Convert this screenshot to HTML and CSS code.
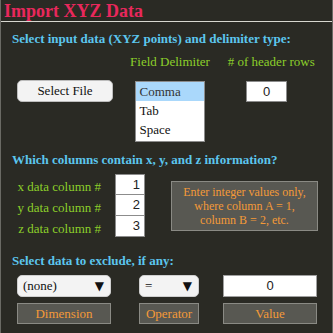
FILE: index.html
```html
<!DOCTYPE html>
<html>
<head>
<meta charset="utf-8">
<link rel="stylesheet" href="styles.css">
</head>
<body>
<div class="panel">
  <div class="header"><h1 class="title">Import XYZ Data</h1></div>

  <h2 class="heading h-first">Select input data (XYZ points) and delimiter type:</h2>
  <div class="grid3">
    <div></div>
    <div class="col-label">Field Delimiter</div>
    <div class="col-label">  # of header rows</div>
    <div class="cell-left"><div class="btn">Select File</div></div>
    <div class="cell-center">
      <div class="listbox">
        <div class="opt selected">Comma</div>
        <div class="opt">Tab</div>
        <div class="opt">Space</div>
      </div>
    </div>
    <div class="cell-center"><div class="num-box hdr">0</div></div>
  </div>

  <h2 class="heading h-second">Which columns contain x, y, and z information?</h2>
  <div class="cols-row">
    <div class="col-list">
      <div class="col-item"><span class="col-name">x data column #</span><span class="num-input">1</span></div>
      <div class="col-item"><span class="col-name">y data column #</span><span class="num-input">2</span></div>
      <div class="col-item"><span class="col-name">z data column #</span><span class="num-input">3</span></div>
    </div>
    <div class="note"><span class="note-line">Enter integer values only,</span><span class="note-line">where column A = 1,</span><span class="note-line">column B = 2, etc.</span></div>
  </div>

  <h2 class="heading h-third">Select data to exclude, if any:</h2>
  <div class="grid3 excl">
    <div class="cell-left"><div class="select wide"><span>(none)</span><span class="arrow">▼</span></div></div>
    <div class="cell-center"><div class="select narrow"><span>=</span><span class="arrow">▼</span></div></div>
    <div class="cell-right"><div class="value-box">0</div></div>
    <div class="cell-left"><div class="tag wide">Dimension</div></div>
    <div class="cell-center"><div class="tag narrow">Operator</div></div>
    <div class="cell-right"><div class="tag wide">Value</div></div>
  </div>
</div>
</body>
</html>
```
FILE: styles.css
```css
html, body {
  margin: 0;
  padding: 0;
  background: #2a2a24;
}
.panel {
  width: 333px;
  height: 333px;
  box-sizing: border-box;
  border-left: 1px solid #6a6a64;
  border-right: 1px solid #6a6a64;
  background: #2a2a24;
  font-family: "Liberation Serif", "DejaVu Serif", serif;
  overflow: hidden;
}
.header {
  height: 21px;
  border-bottom: 1px solid #d8d8d0;
}
.title {
  margin: 0;
  padding-left: 3px;
  font-size: 18px;
  line-height: 22px;
  font-weight: bold;
  color: #e8285c;
}
.heading {
  margin: 0;
  padding-left: 11px;
  font-size: 13px;
  line-height: 16px;
  font-weight: bold;
  color: #5cc6ee;
}
.h-first { margin-top: 9px; }
.h-second { margin-top: 10px; }
.h-third { margin-top: 16px; }

.grid3 {
  display: grid;
  grid-template-columns: 104px 98px 98px;
  padding-left: 16px;
}
.col-label {
  margin-top: 8px;
  height: 14px;
  line-height: 14px;
  font-size: 13px;
  color: #8ccf2a;
  text-align: center;
  white-space: pre;
}
.cell-left { display: flex; justify-content: flex-start; }
.cell-center { display: flex; justify-content: center; }
.cell-right { display: flex; justify-content: flex-end; }

.btn {
  margin-top: 11px;
  width: 94px;
  height: 20px;
  border: 1px solid #bdbdbd;
  border-radius: 5px;
  background: #f3f3f3;
  color: #111;
  font-size: 13px;
  line-height: 20px;
  text-align: center;
}
.listbox {
  margin-top: 12px;
  margin-left: -1px;
  width: 68px;
  height: 59px;
  border: 1px solid #8c8c8c;
  background: #fff;
}
.opt {
  height: 19px;
  line-height: 19px;
  padding-left: 4px;
  font-size: 13px;
  color: #111;
}
.opt.selected {
  background: #aad8fb;
  color: #333;
}
.num-box {
  margin-top: 12px;
  margin-left: -3px;
  width: 39px;
  height: 19px;
  border: 1px solid #8c8c8c;
  background: #fff;
  text-align: center;
  font-family: "Liberation Sans", Arial, sans-serif;
  font-size: 13px;
  line-height: 19px;
  color: #222;
}

.cols-row {
  display: flex;
  margin-top: 6px;
}
.col-list {
  display: flex;
  flex-direction: column;
}
.col-item {
  display: flex;
  align-items: center;
  justify-content: flex-end;
  width: 144px;
  height: 21px;
}
.col-name {
  margin-right: 14px;
  font-size: 13px;
  color: #8ccf2a;
  line-height: 17px;
  padding-top: 3px;
}
.num-input {
  box-sizing: border-box;
  width: 30px;
  height: 21px;
  border: 1px solid #8c8c8c;
  background: #fff;
  text-align: right;
  padding-right: 4px;
  font-family: "Liberation Sans", Arial, sans-serif;
  font-size: 13px;
  line-height: 20px;
  color: #222;
}
.col-item + .col-item .num-input { border-top: 0; }
.note {
  box-sizing: border-box;
  margin-top: 7px;
  margin-left: 26px;
  width: 147px;
  height: 50px;
  border: 1px solid #8a8a84;
  background: #585852;
  color: #f49a38;
  font-size: 12px;
  display: flex;
  flex-direction: column;
  align-items: center;
  padding-top: 3px;
}
.note-line {
  display: block;
  line-height: 14px;
  white-space: nowrap;
}

.excl { margin-top: 6px; row-gap: 6px; }
.select {
  box-sizing: border-box;
  height: 22px;
  border: 1px solid #cfcfcf;
  border-radius: 5px;
  background: #f3f3f3;
  display: flex;
  justify-content: space-between;
  align-items: center;
  padding: 0 6px 0 5px;
  font-size: 13px;
  color: #111;
}
.arrow { font-family: "DejaVu Sans", sans-serif; font-size: 12px; color: #111; }
.wide { width: 94px; }
.narrow { width: 60px; margin-left: -2px; }
.value-box {
  box-sizing: border-box;
  width: 94px;
  height: 22px;
  border: 1px solid #a0a0a0;
  background: #fff;
  text-align: center;
  font-family: "Liberation Sans", Arial, sans-serif;
  font-size: 13px;
  line-height: 20px;
  color: #222;
}
.tag {
  box-sizing: border-box;
  height: 21px;
  border: 1px solid #8a8a84;
  background: #585852;
  color: #f49a38;
  font-size: 13px;
  line-height: 19px;
  text-align: center;
}
```
